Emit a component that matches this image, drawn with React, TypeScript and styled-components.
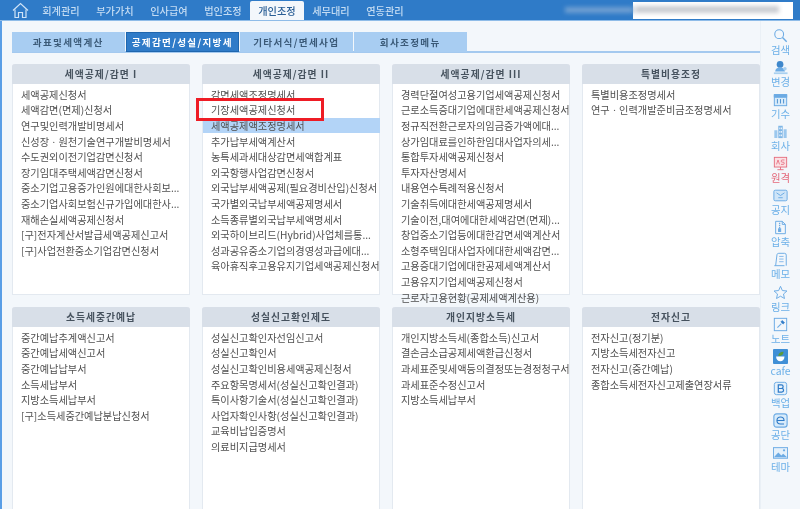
import styled, { createGlobalStyle } from "styled-components";

const GlobalStyle = createGlobalStyle`
  html, body {
    margin: 0;
    padding: 0;
    background: #f3f7fb;
    overflow: hidden;
  }
  * {
    box-sizing: border-box;
  }
`;

const Page = styled.div`
  width: 800px;
  height: 509px;
  display: flex;
  flex-direction: column;
  overflow: hidden;
  background: #f3f7fb;
  font-family: "Noto Sans CJK KR", "Noto Sans", sans-serif;
  filter: blur(0.4px);
`;

const TopNav = styled.nav`
  height: 21px;
  flex: none;
  display: flex;
  align-items: flex-end;
  padding-left: 7px;
  background: #2f7bc8;
  border-bottom: 1px solid #8fbce8;
`;

const HomeButton = styled.div`
  width: 26px;
  height: 20px;
  display: flex;
  align-items: center;
  justify-content: center;
  margin-right: 1px;
`;

const NavItem = styled.div<{ $active?: boolean }>`
  width: 54px;
  height: 19px;
  display: flex;
  align-items: center;
  justify-content: center;
  font-size: 10.2px;
  font-weight: 500;
  white-space: nowrap;
  color: ${(p) => (p.$active ? "#2a5f96" : "#c4dcf3")};
  background: ${(p) => (p.$active ? "#f3f7fb" : "transparent")};
  border-radius: 2px 2px 0 0;
`;

const NavRight = styled.div`
  margin-left: auto;
  margin-right: 7px;
  height: 20px;
  display: flex;
  align-items: center;
`;

const BlurredId = styled.div`
  width: 68px;
  height: 6px;
  background: #6f9fd2;
  filter: blur(2px);
`;

const UserBox = styled.div`
  width: 160px;
  height: 17px;
  padding: 4px 14px 0 2px;
  background: #fff;
`;

const BlurredUser = styled.div`
  height: 7px;
  background: #c9ccd2;
  filter: blur(2px);
`;

const Main = styled.div`
  flex: 1;
  min-height: 0;
  display: flex;
`;

const Content = styled.div`
  width: 760px;
  flex: none;
  position: relative;
  padding: 11px 0 0 10px;
  border-left: 2px solid #5a9ee6;
`;

const TabBar = styled.div`
  height: 21px;
  display: flex;
  gap: 1.5px;
  border-bottom: 2px solid #a4c9ef;
`;

const Tab = styled.div<{ $active?: boolean }>`
  width: 112.5px;
  height: 20px;
  display: flex;
  align-items: center;
  justify-content: center;
  font-size: 9.6px;
  font-weight: 700;
  letter-spacing: 1.3px;
  white-space: nowrap;
  color: ${(p) => (p.$active ? "#fff" : "#3b5a78")};
  background: ${(p) => (p.$active ? "#2f7bc8" : "#a8cdf2")};
  border: 1px solid ${(p) => (p.$active ? "#1f66ae" : "#a8cdf2")};
`;

const PanelGrid = styled.div`
  margin-top: 11px;
  display: grid;
  grid-template-columns: repeat(4, 178px);
  grid-auto-rows: 231px;
  column-gap: 12px;
  row-gap: 12px;
`;

const Panel = styled.section`
  height: 231px;
  display: flex;
  flex-direction: column;
  background: #fff;
  border: 1px solid #e3e9f0;
  border-top: 0;
  border-radius: 3px 3px 0 0;
`;

const TallPanel = styled(Panel)`
  height: 260px;
`;

const PanelTitle = styled.h3`
  height: 20px;
  flex: none;
  margin: 0 -1px;
  display: flex;
  align-items: center;
  justify-content: center;
  background: #d8dfe8;
  border-radius: 3px 3px 0 0;
  font-size: 9.8px;
  font-weight: 700;
  letter-spacing: 1px;
  color: #46525e;
`;

const ItemList = styled.ul`
  margin: 0;
  padding: 2.6px 0 0;
  list-style: none;
`;

const Item = styled.li<{ $selected?: boolean }>`
  height: 15.6px;
  padding-left: 8px;
  margin-right: -1px;
  display: flex;
  align-items: center;
  font-size: 10.2px;
  white-space: nowrap;
  color: #505050;
  background: ${(p) => (p.$selected ? "#b3d4f7" : "transparent")};
`;

const Highlight = styled.div`
  position: absolute;
  left: 194px;
  top: 77px;
  width: 128px;
  height: 23px;
  border: 3px solid #ee1c25;
`;

const Sidebar = styled.aside`
  width: 40px;
  flex: none;
  padding-top: 6.5px;
  display: flex;
  flex-direction: column;
  align-items: center;
  border-left: 1px solid #eaf0f6;
`;

const SideItem = styled.div<{ $red?: boolean }>`
  height: 32.15px;
  display: flex;
  flex-direction: column;
  align-items: center;
  font-size: 10.4px;
  line-height: 13px;
  color: ${(p) => (p.$red ? "#e4687a" : "#6cb0e8")};

  svg {
    display: block;
    width: 15px;
    height: 15px;
  }
`;

const strokeProps = {
  fill: "none",
  stroke: "#6cabe4",
  strokeWidth: 1.1,
};

const HomeIcon = () => (
  <svg width="17" height="17" viewBox="0 0 17 17" fill="none" stroke="#cfe3f7" strokeWidth="1.2">
    <path d="M1 8.500 8.500 1.500 16 8.500" />
    <path d="M3 7.500V15.500H6.500V10.500H10.500V15.500H14V7.500" />
  </svg>
);

const icons: Record<string, React.ReactNode> = {
  검색: (
    <svg viewBox="0 0 17 17" {...strokeProps} strokeWidth="1.2">
      <circle cx="7" cy="7" r="5" />
      <path d="M10.800 10.800 15.500 15.500" strokeWidth="1.600" />
    </svg>
  ),
  변경: (
    <svg viewBox="0 0 17 17" fill="#3f88cc">
      <circle cx="8" cy="5" r="3.800" />
      <path d="M2.500 13c0-3 2.300-4.500 5.500-4.500s5.500 1.500 5.500 4.500z" fill="#6cabe4" />
      <circle cx="13.500" cy="10" r="2" fill="#a8d0f0" />
      <path d="M1 14h15.500v2H1z" fill="#a8d0f0" />
    </svg>
  ),
  기수: (
    <svg viewBox="0 0 17 17" {...strokeProps}>
      <rect x="1.500" y="3" width="14" height="12.500" fill="#d8ebfa" />
      <path d="M1.500 3h14v3h-14z" fill="#6cabe4" />
      <path d="M5 8v5M8.500 8v5M12 8v5" strokeWidth="1" stroke="#3f88cc" />
    </svg>
  ),
  회사: (
    <svg viewBox="0 0 17 17" fill="#7fb6e6">
      <path d="M6 2h5v14H6z" />
      <path d="M1.500 7H5v9H1.500zM12 6h3.500v10H12z" fill="#9cc8ee" />
      <path d="M7.300 4h1v2h-1zM9 4h1v2H9zM7.300 8h1v2h-1zM9 8h1v2H9zM7.300 12h1v2h-1zM9 12h1v2H9z" fill="#fff" />
    </svg>
  ),
  원격: (
    <svg viewBox="0 0 17 17" fill="none" stroke="#e4687a" strokeWidth="1">
      <rect x="1.500" y="1.500" width="14" height="11" fill="#fbe0e4" />
      <path d="M5 15.500h7M8.500 12.500v3" />
      <path d="M4 9.500 5.700 4.500 7.400 9.500M9 9.500h2.500a1.200 1.200 0 0 0 0-2.500h-1a1.200 1.200 0 0 1 0-2.500H13" strokeWidth="0.900" />
    </svg>
  ),
  공지: (
    <svg viewBox="0 0 17 17" {...strokeProps}>
      <rect x="1" y="2.500" width="15" height="12" rx="1.500" fill="#cfe5f8" />
      <path d="M4 5.500 8.500 8.500 13 5.500" />
      <path d="M6 11h5" />
    </svg>
  ),
  압축: (
    <svg viewBox="0 0 17 17" {...strokeProps}>
      <path d="M3 1.500h7.500l3.500 3.500v10.500H3z" />
      <path d="M10.500 1.500V5H14" />
      <path d="M7.500 3v7" strokeWidth="1.500" strokeDasharray="1.500 1" />
      <rect x="6.300" y="10" width="2.400" height="3" fill="#6cabe4" />
    </svg>
  ),
  메모: (
    <svg viewBox="0 0 17 17" {...strokeProps}>
      <path d="M3 15.500 4.500 3a2 2 0 0 1 2-1.500h6.500a2 2 0 0 1 2 2v12" />
      <path d="M7 5h5M7 8h5M7 11h5" strokeWidth="0.900" />
      <path d="M1.500 15.500H13" />
    </svg>
  ),
  링크: (
    <svg viewBox="0 0 17 17" {...strokeProps}>
      <path d="M8.500 1.500 10.600 6.300 15.800 6.800 11.900 10.200 13 15.300 8.500 12.700 4 15.300 5.100 10.200 1.200 6.800 6.400 6.300z" />
    </svg>
  ),
  노트: (
    <svg viewBox="0 0 17 17" {...strokeProps}>
      <rect x="1.500" y="1.500" width="14" height="14" />
      <path d="M5 12 9.500 7.500" strokeWidth="1.200" />
      <path d="M9 5.500 11.500 8 13 6.500 10.500 4z" fill="#2f7bc8" stroke="#2f7bc8" strokeWidth="0.800" />
    </svg>
  ),
  cafe: (
    <svg viewBox="0 0 17 17">
      <rect width="17" height="17" rx="1" fill="#3f8fd6" />
      <path d="M3.500 8.500h9.500c0 3.500-2 5.500-4.700 5.500S3.500 12 3.500 8.500z" fill="#fff" />
      <path d="M6 8c0-3 2-5 6-5 0 3-2 5-6 5z" fill="#5a9a3c" />
    </svg>
  ),
  백업: (
    <svg viewBox="0 0 17 17" {...strokeProps}>
      <rect x="1.500" y="1.500" width="14" height="14" rx="2.500" fill="#e5f1fb" />
      <path d="M6 4.500h3.500a2 2 0 0 1 0 4H6zM6 8.500h4a2 2 0 0 1 0 4H6z" stroke="#2f7bc8" strokeWidth="1.400" />
    </svg>
  ),
  공단: (
    <svg viewBox="0 0 17 17" {...strokeProps}>
      <rect x="1" y="1" width="15" height="15" rx="3" strokeWidth="1.300" fill="#d8ebfa" />
      <path d="M4.500 8.500h8c0-2.500-1.700-4-4-4s-4 1.500-4 4 1.700 4 4 4h4" stroke="#2f7bc8" strokeWidth="1.300" />
    </svg>
  ),
  테마: (
    <svg viewBox="0 0 17 17" {...strokeProps}>
      <rect x="0.500" y="3" width="16" height="12" fill="#e5f1fb" />
      <path d="M1 14 6 8.500 9.500 12 11.500 10 16 14z" fill="#6cabe4" stroke="none" />
      <circle cx="12.500" cy="6" r="1.300" fill="#6cabe4" stroke="none" />
    </svg>
  ),
};

const navItems = ["회계관리", "부가가치", "인사급여", "법인조정", "개인조정", "세무대리", "연동관리"];
const tabs = ["과표및세액계산", "공제감면/성실/지방세", "기타서식/면세사업", "회사조정메뉴"];
const sideItems = ["검색", "변경", "기수", "회사", "원격", "공지", "압축", "메모", "링크", "노트", "cafe", "백업", "공단", "테마"];

const topPanels = [
  {
    title: "세액공제/감면 I",
    items: [
      "세액공제신청서",
      "세액감면(면제)신청서",
      "연구및인력개발비명세서",
      "신성장ㆍ원천기술연구개발비명세서",
      "수도권외이전기업감면신청서",
      "장기임대주택세액감면신청서",
      "중소기업고용증가인원에대한사회보...",
      "중소기업사회보험신규가입에대한사...",
      "재해손실세액공제신청서",
      "[구]전자계산서발급세액공제신고서",
      "[구]사업전환중소기업감면신청서",
    ],
  },
  {
    title: "세액공제/감면 II",
    items: [
      "감면세액조정명세서",
      "기장세액공제신청서",
      "세액공제액조정명세서",
      "추가납부세액계산서",
      "농특세과세대상감면세액합계표",
      "외국항행사업감면신청서",
      "외국납부세액공제(필요경비산입)신청서",
      "국가별외국납부세액공제명세서",
      "소득종류별외국납부세액명세서",
      "외국하이브리드(Hybrid)사업체를통...",
      "성과공유중소기업의경영성과급에대...",
      "육아휴직후고용유지기업세액공제신청서",
    ],
    selected: 2,
  },
  {
    title: "세액공제/감면 III",
    items: [
      "경력단절여성고용기업세액공제신청서",
      "근로소득증대기업에대한세액공제신청서",
      "정규직전환근로자의임금증가액에대...",
      "상가임대료를인하한임대사업자의세...",
      "통합투자세액공제신청서",
      "투자자산명세서",
      "내용연수특례적용신청서",
      "기술취득에대한세액공제명세서",
      "기술이전,대여에대한세액감면(면제)...",
      "창업중소기업등에대한감면세액계산서",
      "소형주택임대사업자에대한세액감면...",
      "고용증대기업에대한공제세액계산서",
      "고용유지기업세액공제신청서",
      "근로자고용현황(공제세액계산용)",
    ],
  },
  {
    title: "특별비용조정",
    items: ["특별비용조정명세서", "연구ㆍ인력개발준비금조정명세서"],
  },
];

const bottomPanels = [
  {
    title: "소득세중간예납",
    items: [
      "중간예납추계액신고서",
      "중간예납세액신고서",
      "중간예납납부서",
      "소득세납부서",
      "지방소득세납부서",
      "[구]소득세중간예납분납신청서",
    ],
  },
  {
    title: "성실신고확인제도",
    items: [
      "성실신고확인자선임신고서",
      "성실신고확인서",
      "성실신고확인비용세액공제신청서",
      "주요항목명세서(성실신고확인결과)",
      "특이사항기술서(성실신고확인결과)",
      "사업자확인사항(성실신고확인결과)",
      "교육비납입증명서",
      "의료비지급명세서",
    ],
  },
  {
    title: "개인지방소득세",
    items: [
      "개인지방소득세(종합소득)신고서",
      "결손금소급공제세액환급신청서",
      "과세표준및세액등의결정또는경정청구서",
      "과세표준수정신고서",
      "지방소득세납부서",
    ],
  },
  {
    title: "전자신고",
    items: ["전자신고(정기분)", "지방소득세전자신고", "전자신고(중간예납)", "종합소득세전자신고제출연장서류"],
  },
];

const PanelItems = ({ items, selected }: { items: string[]; selected?: number }) => (
  <ItemList>
    {items.map((item, i) => (
      <Item key={item} $selected={i === selected}>
        {item}
      </Item>
    ))}
  </ItemList>
);

const App = () => {
  return (
    <Page>
      <GlobalStyle />
      <TopNav>
        <HomeButton>
          <HomeIcon />
        </HomeButton>
        {navItems.map((name) => (
          <NavItem key={name} $active={name === "개인조정"}>
            {name}
          </NavItem>
        ))}
        <NavRight>
          <BlurredId />
          <UserBox>
            <BlurredUser />
          </UserBox>
        </NavRight>
      </TopNav>
      <Main>
        <Content>
          <TabBar>
            {tabs.map((name, i) => (
              <Tab key={name} $active={i === 1}>
                {name}
              </Tab>
            ))}
          </TabBar>
          <PanelGrid>
            {topPanels.map((panel) => (
              <Panel key={panel.title}>
                <PanelTitle>{panel.title}</PanelTitle>
                <PanelItems items={panel.items} selected={panel.selected} />
              </Panel>
            ))}
            {bottomPanels.map((panel) => (
              <TallPanel key={panel.title}>
                <PanelTitle>{panel.title}</PanelTitle>
                <PanelItems items={panel.items} />
              </TallPanel>
            ))}
          </PanelGrid>
          <Highlight />
        </Content>
        <Sidebar>
          {sideItems.map((name) => (
            <SideItem key={name} $red={name === "원격"}>
              {icons[name]}
              {name}
            </SideItem>
          ))}
        </Sidebar>
      </Main>
    </Page>
  );
};

export default App;
